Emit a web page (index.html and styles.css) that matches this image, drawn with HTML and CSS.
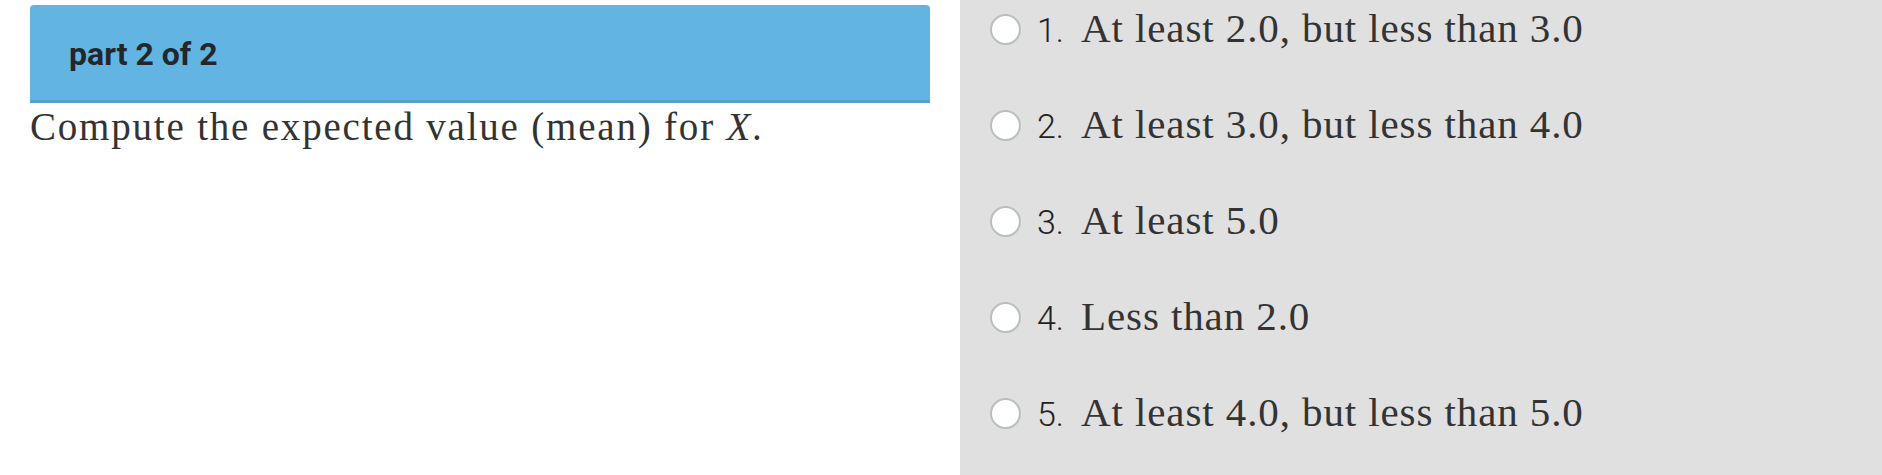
FILE: index.html
```html
<!DOCTYPE html>
<html lang="en">
<head>
<meta charset="utf-8">
<title>part 2 of 2</title>
<link rel="stylesheet" href="styles.css">
</head>
<body>
<div class="page">
  <section class="question">
    <header class="part-header"><h2 class="part-title">part 2 of 2</h2></header>
    <p class="prompt">Compute the expected value (mean) for <i class="var">X</i>.</p>
  </section>
  <section class="answers">
    <label class="option"><span class="radio"></span><span class="num">1.</span><span class="txt">At least 2.0, but less than 3.0</span></label>
    <label class="option"><span class="radio"></span><span class="num">2.</span><span class="txt">At least 3.0, but less than 4.0</span></label>
    <label class="option"><span class="radio"></span><span class="num">3.</span><span class="txt">At least 5.0</span></label>
    <label class="option"><span class="radio"></span><span class="num">4.</span><span class="txt">Less than 2.0</span></label>
    <label class="option"><span class="radio"></span><span class="num">5.</span><span class="txt">At least 4.0, but less than 5.0</span></label>
  </section>
</div>
</body>
</html>
```

FILE: styles.css
```css
* { box-sizing: border-box; }
html, body { margin: 0; padding: 0; background: #ffffff; }
.page {
  display: flex;
  width: 1882px;
  height: 475px;
  overflow: hidden;
}
.question {
  width: 960px;
  padding: 5px 30px 0 30px;
}
.part-header {
  height: 98px;
  background: #62b5e2;
  border-bottom: 3px solid #52a2cf;
  border-radius: 4px 4px 0 0;
  display: flex;
  align-items: center;
  padding: 2px 39px 0 39px;
}
.part-title {
  margin: 0;
  font-family: Roboto, "Liberation Sans", sans-serif;
  font-weight: 700;
  font-size: 32px;
  color: #23272b;
}
.prompt {
  margin: 0;
  padding-top: 3px;
  font-family: "Liberation Serif", serif;
  font-size: 39px;
  line-height: 42px;
  letter-spacing: 1.8px;
  color: #333333;
}
.var { font-style: italic; }
.answers {
  flex: 1;
  background: #e0e0e0;
  padding: 1px 0 0 30px;
  display: flex;
  flex-direction: column;
  gap: 39px;
}
.option {
  height: 57px;
  display: flex;
  align-items: center;
}
.radio {
  width: 31px;
  height: 31px;
  border-radius: 50%;
  background: #ffffff;
  border: 2px solid #b8bdc6;
  flex: none;
}
.num {
  margin-left: 16px;
  font-family: Roboto, "Liberation Sans", sans-serif;
  font-weight: 300;
  font-size: 34px;
  line-height: 40px;
  color: #222222;
}
.txt {
  margin-left: 17px;
  font-family: "Liberation Serif", serif;
  font-size: 41px;
  line-height: 40px;
  padding-bottom: 4px;
  letter-spacing: 0.9px;
  color: #333333;
}
```
